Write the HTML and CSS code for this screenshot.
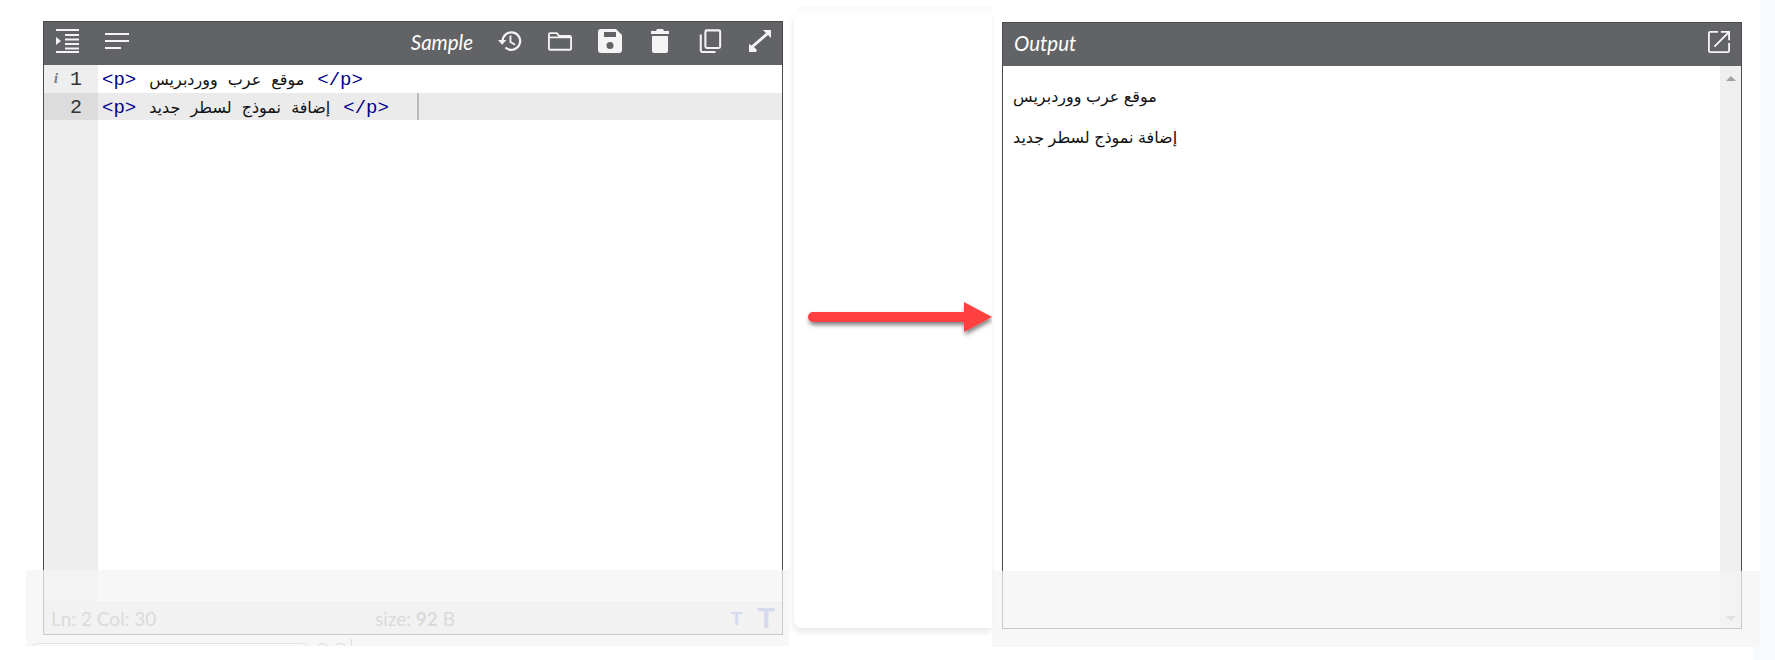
FILE: index.html
```html
<!DOCTYPE html>
<html lang="en">
<head>
<meta charset="utf-8">
<title>HTML editor</title>
<link rel="stylesheet" href="styles.css">
</head>
<body>
<div class="side-tint"></div>
<main class="stage">
  <section class="panel editor">
    <header class="bar">
      <svg class="ico" viewBox="0 0 24 24"><path d="M1 1h23M10 6h14M10 10.500h14M10 15h14M10 19.500h14M1 23h23" stroke="#f4f4f4" stroke-width="2" fill="none"/><path d="M1 8v8l5-4z" fill="#f4f4f4"/></svg>
      <svg class="ico second" viewBox="0 0 24 24"><path d="M0 5h24M0 12h24M0 19h16" stroke="#f4f4f4" stroke-width="2" fill="none"/></svg>
      <span class="title sample">Sample</span>
      <svg class="ico tool" viewBox="0 0 26 26"><path d="M5 13a9.500 9.500 0 1 1 3 7" stroke="#f4f4f4" stroke-width="2.400" fill="none"/><path d="M0 12h9l-4.500 5z" fill="#f4f4f4"/><path d="M13.500 7v7l5 3" stroke="#f4f4f4" stroke-width="2" fill="none"/></svg>
      <svg class="ico tool" viewBox="0 0 26 24"><path d="M1 20V5a1.500 1.500 0 0 1 1.500-1.500h7l2.500 3h11.500A1.500 1.500 0 0 1 25 8v12a1.500 1.500 0 0 1-1.500 1.500h-21A1.500 1.500 0 0 1 1 20zM2 8h22" stroke="#f4f4f4" stroke-width="2" fill="none"/></svg>
      <svg class="ico tool" viewBox="0 0 24 24"><path fill-rule="evenodd" d="M3 0h15l6 6v15a3 3 0 0 1-3 3H3a3 3 0 0 1-3-3V3a3 3 0 0 1 3-3zm3 3v5h12V3zm6 10a3.500 3.500 0 1 0 0 7 3.500 3.500 0 0 0 0-7z" fill="#f4f4f4"/></svg>
      <svg class="ico tool" viewBox="0 0 24 24"><path d="M9 0h6l1 2h5v3H3V2h5zM4 7h16v15a2 2 0 0 1-2 2H6a2 2 0 0 1-2-2z" fill="#f4f4f4"/></svg>
      <svg class="ico tool" viewBox="0 0 24 26"><path d="M8.500 1.500h13a1.500 1.500 0 0 1 1.500 1.500v16a1.500 1.500 0 0 1-1.500 1.500h-13A1.500 1.500 0 0 1 7 19V3a1.500 1.500 0 0 1 1.500-1.500zM2 6v17a2 2 0 0 0 2 2h14" stroke="#f4f4f4" stroke-width="2.200" fill="none"/></svg>
      <svg class="ico tool" viewBox="0 0 24 24"><path d="M15 1h8v8l-3-3L6 18l3 3-1 2H1v-8l2.500 1.500L18 4z" fill="#f4f4f4"/></svg>
    </header>
    <div class="code">
      <div class="line first">
        <span class="gutter"><i class="info">i</i>1</span>
        <span class="src"><b>&lt;p&gt;</b><bdi class="ar">موقع عرب ووردبريس</bdi><b>&lt;/p&gt;</b></span>
      </div>
      <div class="line active">
        <span class="gutter">2</span>
        <span class="src"><b>&lt;p&gt;</b><bdi class="ar">إضافة نموذج لسطر جديد</bdi><b>&lt;/p&gt;</b><span class="caret"></span></span>
      </div>
      <div class="gutter-fill"></div>
    </div>
    <footer class="status">
      <span class="pos">Ln: 2 Col: 30</span>
      <span class="size">size: <b>92</b> B</span>
      <span class="t-small">T</span>
      <span class="t-big">T</span>
    </footer>
  </section>

  <aside class="middle"></aside>

  <section class="panel output">
    <header class="bar">
      <span class="title">Output</span>
      <svg class="ico launch" viewBox="0 0 24 24"><path d="M11 1H2.500A1.500 1.500 0 0 0 1 2.500v19A1.500 1.500 0 0 0 2.500 23h19a1.500 1.500 0 0 0 1.500-1.500V13M7 17 22 2M14 1h9v9" stroke="#f4f4f4" stroke-width="2" fill="none"/></svg>
    </header>
    <div class="result">
      <div class="text">
        <p>موقع عرب ووردبريس</p>
        <p>إضافة نموذج لسطر جديد</p>
      </div>
      <div class="scroll"><span class="up"></span><span class="down"></span></div>
    </div>
  </section>
</main>

<div class="fade fade-left">
  <span class="peek-pill"></span>
  <span class="peek-dot"></span>
  <span class="peek-dot"></span>
  <span class="peek-rule"></span>
</div>
<div class="fade fade-right"></div>
<svg class="arrow" viewBox="0 0 190 50">
  <defs><filter id="sh" x="-10%" y="-40%" width="120%" height="200%"><feDropShadow dx="1" dy="3" stdDeviation="2" flood-color="#000" flood-opacity=".5"/></filter></defs>
  <path filter="url(#sh)" d="M11 16H162V6l28 15-28 15V26H11a5 5 0 0 1 0-10z" fill="#ff4040"/>
</svg>
</body>
</html>
```
FILE: styles.css
```css
html, body { margin: 0; padding: 0; background: #fff; }
body { width: 1775px; height: 660px; overflow: hidden; position: relative; font-family: Lato, "Open Sans", sans-serif; }

.stage { display: flex; align-items: flex-start; padding: 21px 0 0 43px; }

.panel { box-sizing: border-box; width: 740px; border: 1px solid #4a4b4f; background: #fff; display: flex; flex-direction: column; }
.editor { height: 614px; }
.output { height: 607px; margin-top: 1px; }

.bar { flex: none; box-sizing: border-box; height: 43px; background: #626366; display: flex; align-items: center; padding: 0 10px 5px 11px; }
.ico { display: block; width: 24px; height: 24px; flex: none; }
.second { margin-left: 26px; }
.tool { margin-left: 26px; }
.title { color: #fff; font-style: italic; font-size: 20.500px; margin-top: 2px; font-family: Lato, "Open Sans", sans-serif; }
.sample { margin-left: auto; margin-right: -1px; }
.launch { margin-left: auto; width: 22px; height: 22px; margin-right: 1px; }

.code { flex: 1; display: flex; flex-direction: column; min-height: 0; }
.line { display: flex; height: 27px; line-height: 30px; }
.line.first { height: 28px; line-height: 30px; }
.gutter { flex: none; box-sizing: border-box; width: 54px; background: #eee; color: #333; text-align: right; padding-right: 16px; font-family: "Liberation Mono", monospace; font-size: 20px; position: relative; }
.info { position: absolute; left: 10px; top: 0; font: italic bold 14px/28px "Liberation Serif", serif; color: #777; }
.src { flex: 1; padding: 2px 0 0 4px; box-sizing: border-box; color: #111; display: flex; align-items: center; white-space: pre; }
.src b { font-weight: normal; color: #00008b; font-family: "Liberation Mono", monospace; font-size: 19px; }
.ar { font-family: "DejaVu Sans", sans-serif; font-size: 16px; word-spacing: 5px; margin: 0 13px; direction: rtl; }
.active .src { background: #ebebeb; }
.active .gutter { background: #dcdcdc; }
.caret { width: 2px; height: 27px; margin-top: -2px; background: #bbb; margin-left: 28px; }
.gutter-fill { flex: 1; width: 54px; background: #eee; }

.status { flex: none; box-sizing: border-box; height: 32px; display: flex; align-items: center; border-top: 1px solid #dedede; background: #e9e9e9; color: #8c8c8c; font-size: 19px; padding: 0 7px; }
.pos { width: 324px; }
.size b { font-weight: 700; }
.t-small { margin-left: auto; font: bold 19px "Liberation Sans", sans-serif; color: #7c8cdc; }
.t-big { margin-left: 15px; font: bold 29px "Liberation Sans", sans-serif; color: #7c8cdc; }

.middle { flex: none; width: 198px; height: 615px; margin: -8px 10px 0 11px; background: #fff; border-radius: 8px 0 0 8px; box-shadow: 0 -8px 0 -1px #fbfbfb, -1px 4px 6px rgba(0,0,0,.09); }

.result { flex: 1; display: flex; min-height: 0; }
.text { flex: 1; padding: 21px 10px 0; font: 16px/20px "Liberation Sans", "DejaVu Sans", sans-serif; color: #111; }
.text p { margin: 0 0 21px; width: max-content; }
.scroll { flex: none; width: 21px; background: #efefef; display: flex; flex-direction: column; justify-content: space-between; align-items: center; padding: 10px 0 7px; box-sizing: border-box; }
.up { width: 0; height: 0; border: 5px solid transparent; border-top: 0; border-bottom: 5px solid #a3a3a3; }
.down { width: 0; height: 0; border: 5px solid transparent; border-bottom: 0; border-top: 5px solid #a3a3a3; }

.fade { position: absolute; background: rgba(244,244,244,.75); }
.fade-left { left: 26px; top: 570px; width: 763px; height: 76px; overflow: hidden; display: flex; align-items: flex-start; gap: 3px; padding: 73px 0 0 2px; box-sizing: border-box; }
.fade-right { left: 992px; top: 571px; width: 768px; height: 76px; }
.peek-pill { flex: none; width: 282px; height: 20px; border: 1px solid #dfe3ec; border-radius: 10px; }
.peek-dot { flex: none; width: 13px; height: 13px; border: 1px solid #dcdcdc; border-radius: 50%; }
.peek-rule { flex: none; width: 1px; height: 10px; margin-top: -4px; background: #ddd; }
.side-tint { position: absolute; right: 0; top: 0; width: 15px; height: 660px; background: #f7faff; }
.side-tint::after { content: ""; position: absolute; left: -7px; top: 647px; width: 7px; height: 13px; background: #f7faff; }
.arrow { position: absolute; left: 802px; top: 296px; width: 190px; height: 50px; }
```
